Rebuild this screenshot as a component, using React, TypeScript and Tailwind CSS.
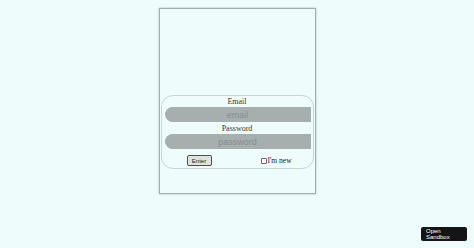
export default function App() {
    return (
        <div className="relative h-[248px] w-full bg-[#effcfc]" style={{ fontFamily: '"Liberation Serif", serif' }}>
            <div className="mx-auto w-[157px] pt-[8px]">
                <div className="h-[186px] border border-[#9fb0b0] shadow-[0_0_2px_#a9b8b8] px-[1px] pt-[86px]">
                    <form className="h-[74px] rounded-[12px] border border-[#c9d4d4] pt-[1px] flex flex-col">
                        <label className="text-center text-[8px] leading-[10px] text-[#333]">Email</label>
                        <input
                            placeholder="email"
                            className="ml-[3px] h-[15px] w-[146px] rounded-l-full bg-[#a6aeae] text-center text-[9px] outline-none placeholder:text-[#83908f]"
                            style={{ fontFamily: '"Liberation Sans", Arial, sans-serif' }}
                        />
                        <label className="mt-[2px] text-center text-[8px] leading-[10px] text-[#333]">Password</label>
                        <input
                            placeholder="password"
                            type="password"
                            className="ml-[3px] h-[15px] w-[146px] rounded-l-full bg-[#a6aeae] text-center text-[9px] outline-none placeholder:text-[#83908f]"
                            style={{ fontFamily: '"Liberation Sans", Arial, sans-serif' }}
                        />
                        <div className="mt-[6px] flex items-center pl-[25px]">
                            <button
                                type="button"
                                className="h-[11px] w-[25px] rounded-[2px] border-[1.5px] border-[#4b4f4b] bg-[#dfe2dd] text-[6px] leading-none text-[#222]"
                                style={{ fontFamily: '"Liberation Sans", Arial, sans-serif' }}
                            >
                                Enter
                            </button>
                            <label className="ml-[49px] flex items-center text-[7.5px] text-[#222]">
                                <input
                                    type="checkbox"
                                    className="m-0 mr-[1px] h-[6px] w-[6px] appearance-none rounded-[1px] border border-[#666] bg-white"
                                />
                                I'm new
                            </label>
                        </div>
                    </form>
                </div>
            </div>
            <button
                type="button"
                className="absolute right-[7px] bottom-[7px] h-[14px] w-[46px] rounded-[2px] bg-[#151515] pl-[5px] text-left text-[6px] leading-[6px] text-white"
                style={{ fontFamily: '"Liberation Sans", Arial, sans-serif' }}
            >
                Open
                <br />
                Sandbox
            </button>
        </div>
    );
}
